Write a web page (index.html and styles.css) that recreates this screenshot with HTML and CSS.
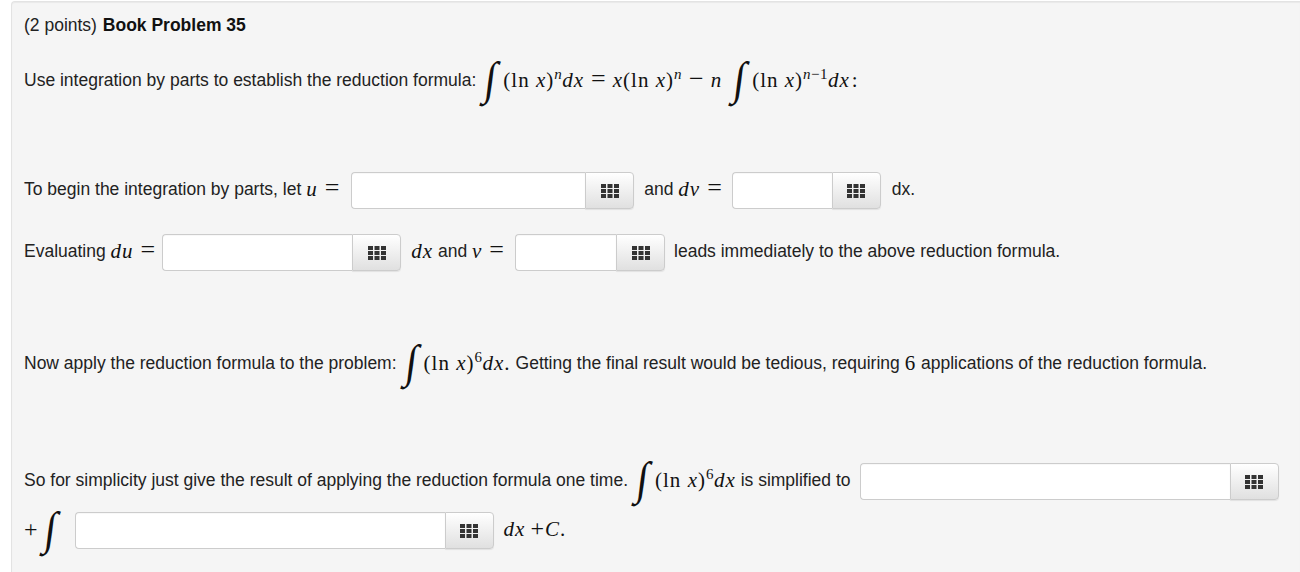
FILE: index.html
```html
<!DOCTYPE html>
<html lang="en">
  <head>
    <meta charset="UTF-8" />
    <title>Book Problem 35</title>
    <link rel="stylesheet" href="styles.css">
  </head>
  <body>
    <svg class="defs" width="0" height="0">
      <symbol id="grid" viewBox="0 0 18 14">
        <path d="M0 0h5v4H0zM6.500 0h5v4h-5zM13 0h5v4h-5zM0 5h5v4H0zM6.500 5h5v4h-5zM13 5h5v4h-5zM0 10h5v4H0zM6.500 10h5v4h-5zM13 10h5v4h-5z" />
      </symbol>
    </svg>

    <div class="well">
      <div class="line title">(2 points)&nbsp;<b>Book Problem 35</b></div>

      <div class="line formula">
        <span>Use integration by parts to establish the reduction formula:</span>
        <span class="math first">
          <span class="int">∫</span><span class="up">(ln </span><i>x</i><span class="up">)</span><sup><i>n</i></sup><i>dx</i><span class="up op">=</span><i>x</i><span class="up">(ln </span><i>x</i><span class="up">)</span><sup><i>n</i></sup><span class="up op">−</span><i>n</i>
          <span class="int second">∫</span><span class="up">(ln </span><i>x</i><span class="up">)</span><sup><i>n</i>−1</sup><i>dx</i><span class="up colon">:</span>
        </span>
      </div>

      <div class="line begin">
        <span>To begin the integration by parts, let&nbsp;</span><span class="math"><i>u</i><span class="up op">=</span></span>
        <div class="group w-283 gap-12">
          <input type="text" />
          <button><svg class="icon"><use href="#grid" /></svg></button>
        </div>
        <span>and&nbsp;</span><span class="math"><i>dv</i><span class="up op">=</span></span>
        <div class="group w-149 gap-10">
          <input type="text" />
          <button><svg class="icon"><use href="#grid" /></svg></button>
        </div>
        <span>dx.</span>
      </div>

      <div class="line evaluate">
        <span>Evaluating&nbsp;</span><span class="math"><i>du</i><span class="up op">=</span></span>
        <div class="group w-239 gap-7">
          <input type="text" />
          <button><svg class="icon"><use href="#grid" /></svg></button>
        </div>
        <span class="math"><i>dx</i></span><span>&nbsp;and&nbsp;</span><span class="math"><i>v</i><span class="up op">=</span></span>
        <div class="group w-150 gap-11">
          <input type="text" />
          <button><svg class="icon"><use href="#grid" /></svg></button>
        </div>
        <span>leads immediately to the above reduction formula.</span>
      </div>

      <div class="line apply">
        <span>Now apply the reduction formula to the problem:</span>
        <span class="math first">
          <span class="int">∫</span><span class="up">(ln </span><i>x</i><span class="up">)</span><sup class="digit">6</sup><i>dx</i><span class="up">.</span>
        </span>
        <span class="after-dot">Getting the final result would be tedious, requiring&nbsp;</span><span class="math"><span class="up">6</span></span><span>&nbsp;applications of the reduction formula.</span>
      </div>

      <div class="line simplify">
        <span>So for simplicity just give the result of applying the reduction formula one time.</span>
        <span class="math first">
          <span class="int">∫</span><span class="up">(ln </span><i>x</i><span class="up">)</span><sup class="digit">6</sup><i>dx</i>
        </span>
        <span>&nbsp;is simplified to</span>
        <div class="group w-419 gap-9">
          <input type="text" />
          <button><svg class="icon"><use href="#grid" /></svg></button>
        </div>
      </div>

      <div class="line last">
        <span class="math"><span class="up plus-sign">+</span><span class="int tall">∫</span></span>
        <div class="group w-419 after-int">
          <input type="text" />
          <button><svg class="icon"><use href="#grid" /></svg></button>
        </div>
        <span class="math"><i>dx</i><span class="up plus">+</span><i>C</i><span class="up">.</span></span>
      </div>
    </div>
  </body>
</html>
```

FILE: styles.css
```css
html,
body {
  height: 100%;
  overflow: hidden;
}

body {
  margin: 0;
  padding-top: 1px;
  box-sizing: border-box;
  font-family: "Liberation Sans", Arial, sans-serif;
  font-size: 17.5px;
  color: #222;
  background: white;
}

.defs {
  display: block;
}

.well {
  margin-left: 11px;
  height: 100%;
  box-sizing: border-box;
  padding: 13px 0 0 12px;
  background: #f5f5f5;
  border: 1px solid #e3e3e3;
  border-width: 1px 0 0 1px;
  border-radius: 4px 0 0 0;
  box-shadow: inset 0 1px 1px rgba(0, 0, 0, 0.05);
}

.line {
  display: flex;
  align-items: center;
  white-space: pre;
  height: 37px;
}

.title {
  height: 20px;
}

.title b {
  color: #111;
  margin-left: 1px;
}

.formula {
  height: 50px;
  margin-top: 20px;
}

.begin {
  margin-top: 67px;
}

.evaluate {
  margin-top: 25px;
}

.apply {
  height: 50px;
  margin-top: 67px;
}

.simplify {
  margin-top: 75px;
}

.last {
  margin-top: 12px;
}

/* text next to an input sits a little above the box center */
.begin > span,
.evaluate > span,
.simplify > span,
.last > span {
  margin-bottom: 2px;
}

/* math */
.math {
  display: inline-flex;
  align-items: baseline;
  font-family: "Liberation Serif", "Times New Roman", serif;
  font-size: 21px;
  letter-spacing: 1px;
  color: #111;
}

.math i {
  font-style: italic;
}

.math sup {
  font-size: 15px;
  line-height: 0;
  position: relative;
  top: -8px;
  vertical-align: baseline;
  letter-spacing: 0.5px;
}

.math .digit {
  font-style: normal;
}

.first {
  margin-left: 9px;
}

.after-dot {
  margin-left: 5px;
}

.int {
  font-size: 42px;
  line-height: 0;
  height: 0;
  width: 18px;
  letter-spacing: 0;
  transform: translateY(6px) scaleY(1.1) skewX(-8deg);
}

.second {
  margin-left: 12px;
}

.colon {
  margin-left: 2px;
}

.plus-sign {
  font-size: 24px;
  letter-spacing: 0;
}

.tall {
  margin-left: 7px;
}

.op {
  font-size: 26px;
  line-height: 0;
  letter-spacing: 0;
  margin: 0 0 0 7px;
}

.formula .op {
  margin: 0 7px;
}

.plus {
  font-size: 24px;
  line-height: 0;
  margin: 0 0 0 5px;
}

/* input with the palette button */
.group {
  display: flex;
  height: 37px;
  margin: 0 10px;
  box-sizing: border-box;
  flex: none;
}

.gap-12 {
  margin-left: 12px;
}

.gap-11 {
  margin-left: 11px;
  margin-right: 9px;
}

.gap-10 {
  margin-left: 10px;
  margin-right: 11px;
}

.gap-9 {
  margin-left: 9px;
}

.gap-7 {
  margin-left: 7px;
}

.group input {
  flex: 1;
  min-width: 0;
  height: 100%;
  box-sizing: border-box;
  padding: 0 12px;
  background: white;
  border: 1px solid #ccc;
  border-right: none;
  border-radius: 4px 0 0 4px;
  box-shadow: inset 0 1px 1px rgba(0, 0, 0, 0.03);
}

.group button {
  width: 49px;
  height: 100%;
  padding: 0;
  display: flex;
  align-items: center;
  justify-content: center;
  background: linear-gradient(to bottom, #fff, #e0e0e0);
  border: 1px solid #ccc;
  border-radius: 0 4px 4px 0;
  box-shadow: 0 1px 1px rgba(0, 0, 0, 0.08);
}

.icon {
  width: 18px;
  height: 14px;
  fill: #333;
}

.w-283 {
  width: 283px;
}

.w-149 {
  width: 149px;
}

.w-239 {
  width: 239px;
}

.w-150 {
  width: 150px;
}

.w-419 {
  width: 419px;
}

.after-int {
  margin-left: 12px;
}
```
